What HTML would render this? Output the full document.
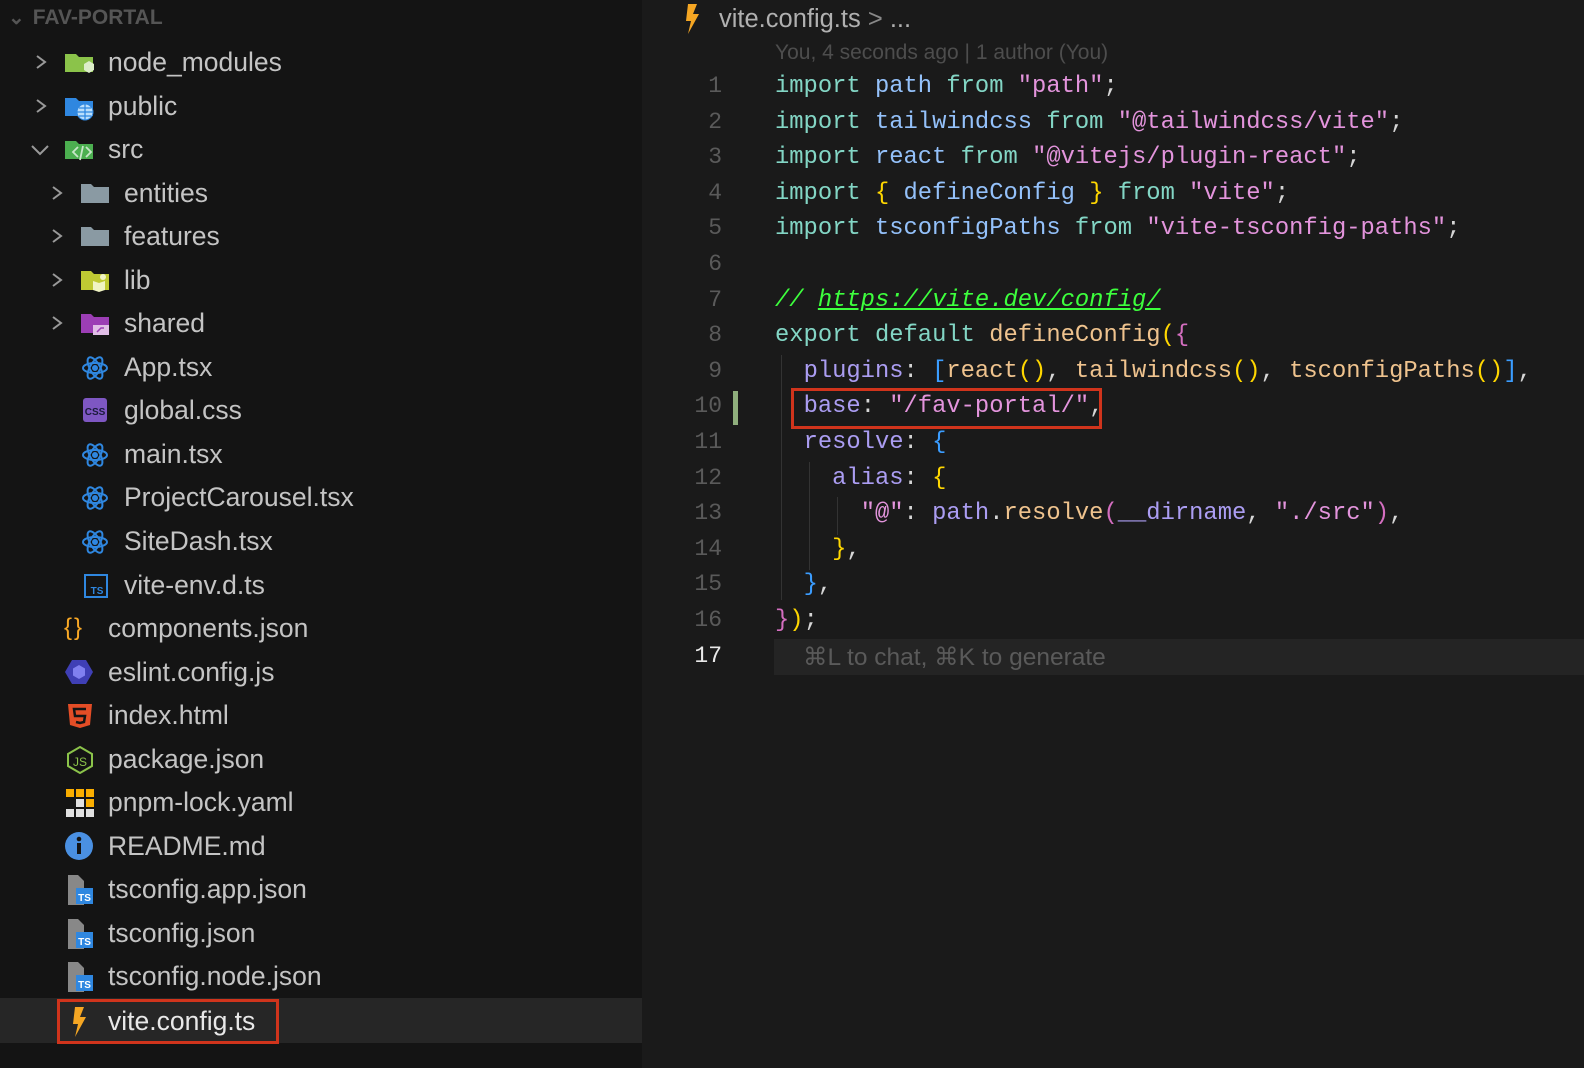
<!DOCTYPE html>
<html><head><meta charset="utf-8">
<style>
*{margin:0;padding:0;box-sizing:border-box}
body{width:1584px;height:1068px;overflow:hidden;background:#1a1a1a;font-family:"Liberation Sans",sans-serif;position:relative}
#side{position:absolute;left:0;top:0;width:642px;height:1068px;background:#141414}
.r{position:absolute;height:44px;line-height:44px;font-size:26.5px;color:#c4c4c4;white-space:nowrap}
.code{position:absolute;left:775px;font-family:"Liberation Mono",monospace;font-size:23.8px;line-height:35.6px;white-space:pre;color:#d6d6d6}
.ln{position:absolute;left:660px;width:62px;text-align:right;font-family:"Liberation Mono",monospace;font-size:23px;line-height:35.6px;color:#5a5a5a}
.k{color:#83d6c5}.v{color:#94c1fa}.s{color:#e394dc}.y{color:#ffd700}.f{color:#efc38e}.p{color:#ab9df2}.b{color:#3b9dff}.pk{color:#d46ec0}.w{color:#d6d6d6}
.g{position:absolute;width:1px;background:#333}
</style></head><body>
<div id="side">
<div class="r" style="left:8px;top:0;height:36px;line-height:36px;font-size:21px;font-weight:bold;color:#555"><span style="font-size:20px;color:#555;margin-right:8px">&#8964;</span>FAV-PORTAL</div>
<div style="position:absolute;left:0;top:998px;width:642px;height:45px;background:#262626"></div>
<div style="position:absolute;left:57px;top:999px;width:222px;height:45px;border:3px solid #d0341c"></div>

<div class="r" style="top:40px;left:0;width:640px">
 <svg style="position:absolute;left:34px;top:14px" width="14" height="16"><path d="M3 2l8 6-8 6" fill="none" stroke="#999" stroke-width="2"/></svg>
 <svg style="position:absolute;left:65px;top:11px" width="32" height="24"><path d="M0 3h11l3 3h14v15H0z" fill="#8bc34a"/><path d="M24 10l5 3v6l-5 3-5-3v-6z" fill="#dcedc8"/></svg>
 <span style="position:absolute;left:108px">node_modules</span></div>
<div class="r" style="top:84px;left:0;width:640px">
 <svg style="position:absolute;left:34px;top:14px" width="14" height="16"><path d="M3 2l8 6-8 6" fill="none" stroke="#999" stroke-width="2"/></svg>
 <svg style="position:absolute;left:65px;top:11px" width="32" height="26"><path d="M0 3h11l3 3h14v15H0z" fill="#2f87e0"/><circle cx="20" cy="17" r="8" fill="#bbdefb" stroke="#2f87e0" stroke-width="1"/><path d="M12 17h16M20 9v16M14 13h12M14 21h12" stroke="#2f87e0" stroke-width="1.3"/></svg>
 <span style="position:absolute;left:108px">public</span></div>
<div class="r" style="top:127px;left:0;width:640px">
 <svg style="position:absolute;left:30px;top:16px" width="20" height="14"><path d="M2 3l8 8 8-8" fill="none" stroke="#999" stroke-width="2"/></svg>
 <svg style="position:absolute;left:65px;top:11px" width="32" height="24"><path d="M0 3h11l3 3h14v15H0z" fill="#4caf50"/><path d="M13 9l-5 5 5 5M21 9l5 5-5 5M18 8l-3 14" fill="none" stroke="#c8e6c9" stroke-width="1.8"/></svg>
 <span style="position:absolute;left:108px">src</span></div>
<div class="r" style="top:171px;left:0"><svg style="position:absolute;left:50px;top:14px" width="14" height="16"><path d="M3 2l8 6-8 6" fill="none" stroke="#999" stroke-width="2"/></svg><svg style="position:absolute;left:81px;top:13px" width="30" height="20"><path d="M0 0h10l3 3h15v16H0z" fill="#8a9aa3"/></svg><span style="position:absolute;left:124px">entities</span></div>
<div class="r" style="top:214px;left:0"><svg style="position:absolute;left:50px;top:14px" width="14" height="16"><path d="M3 2l8 6-8 6" fill="none" stroke="#999" stroke-width="2"/></svg><svg style="position:absolute;left:81px;top:13px" width="30" height="20"><path d="M0 0h10l3 3h15v16H0z" fill="#8a9aa3"/></svg><span style="position:absolute;left:124px">features</span></div>
<div class="r" style="top:258px;left:0"><svg style="position:absolute;left:50px;top:14px" width="14" height="16"><path d="M3 2l8 6-8 6" fill="none" stroke="#999" stroke-width="2"/></svg><svg style="position:absolute;left:81px;top:11px" width="32" height="24"><path d="M0 2h10l3 3h15v16H0z" fill="#c0ca33"/><path d="M12 12l6 2 6-2v9l-6 2-6-2z" fill="#f0f4c3"/><circle cx="22" cy="8" r="3" fill="#f0f4c3"/></svg><span style="position:absolute;left:124px">lib</span></div>
<div class="r" style="top:301px;left:0"><svg style="position:absolute;left:50px;top:14px" width="14" height="16"><path d="M3 2l8 6-8 6" fill="none" stroke="#999" stroke-width="2"/></svg><svg style="position:absolute;left:81px;top:11px" width="32" height="24"><path d="M0 2h10l3 3h15v16H0z" fill="#9c3eb5"/><rect x="12" y="13" width="16" height="10" fill="#e1bee7"/><path d="M16 20l4-4h3" stroke="#9c3eb5" stroke-width="1.5" fill="none"/></svg><span style="position:absolute;left:124px">shared</span></div>
<div class="r" style="top:345px;left:0"><svg style="position:absolute;left:81px;top:9px" width="28" height="28" viewBox="0 0 28 28" fill="none" stroke="#2f87e0" stroke-width="2"><ellipse cx="14" cy="14" rx="12" ry="5"/><ellipse cx="14" cy="14" rx="12" ry="5" transform="rotate(60 14 14)"/><ellipse cx="14" cy="14" rx="12" ry="5" transform="rotate(120 14 14)"/><circle cx="14" cy="14" r="2" fill="#2f87e0"/></svg><span style="position:absolute;left:124px">App.tsx</span></div>
<div class="r" style="top:388px;left:0"><svg style="position:absolute;left:83px;top:10px" width="24" height="24"><rect width="24" height="24" rx="3" fill="#7e57c2"/><text x="12" y="17" font-size="10" font-family="Liberation Sans" font-weight="bold" text-anchor="middle" fill="#1a1a3a">CSS</text></svg><span style="position:absolute;left:124px">global.css</span></div>
<div class="r" style="top:432px;left:0"><svg style="position:absolute;left:81px;top:9px" width="28" height="28" viewBox="0 0 28 28" fill="none" stroke="#2f87e0" stroke-width="2"><ellipse cx="14" cy="14" rx="12" ry="5"/><ellipse cx="14" cy="14" rx="12" ry="5" transform="rotate(60 14 14)"/><ellipse cx="14" cy="14" rx="12" ry="5" transform="rotate(120 14 14)"/><circle cx="14" cy="14" r="2" fill="#2f87e0"/></svg><span style="position:absolute;left:124px">main.tsx</span></div>
<div class="r" style="top:475px;left:0"><svg style="position:absolute;left:81px;top:9px" width="28" height="28" viewBox="0 0 28 28" fill="none" stroke="#2f87e0" stroke-width="2"><ellipse cx="14" cy="14" rx="12" ry="5"/><ellipse cx="14" cy="14" rx="12" ry="5" transform="rotate(60 14 14)"/><ellipse cx="14" cy="14" rx="12" ry="5" transform="rotate(120 14 14)"/><circle cx="14" cy="14" r="2" fill="#2f87e0"/></svg><span style="position:absolute;left:124px">ProjectCarousel.tsx</span></div>
<div class="r" style="top:519px;left:0"><svg style="position:absolute;left:81px;top:9px" width="28" height="28" viewBox="0 0 28 28" fill="none" stroke="#2f87e0" stroke-width="2"><ellipse cx="14" cy="14" rx="12" ry="5"/><ellipse cx="14" cy="14" rx="12" ry="5" transform="rotate(60 14 14)"/><ellipse cx="14" cy="14" rx="12" ry="5" transform="rotate(120 14 14)"/><circle cx="14" cy="14" r="2" fill="#2f87e0"/></svg><span style="position:absolute;left:124px">SiteDash.tsx</span></div>
<div class="r" style="top:563px;left:0"><svg style="position:absolute;left:84px;top:11px" width="24" height="24"><rect x="1" y="1" width="22" height="22" fill="none" stroke="#2f87e0" stroke-width="2"/><text x="13" y="20" font-size="10" font-family="Liberation Sans" font-weight="bold" text-anchor="middle" fill="#2f87e0">TS</text></svg><span style="position:absolute;left:124px">vite-env.d.ts</span></div>
<div class="r" style="top:606px;left:0"><span style="position:absolute;left:64px;color:#f9a825;font-size:24px;letter-spacing:2px">{}</span><span style="position:absolute;left:108px">components.json</span></div>
<div class="r" style="top:650px;left:0"><svg style="position:absolute;left:65px;top:9px" width="28" height="26"><path d="M7 1h14l7 12-7 12H7L0 13z" fill="#3f3fb5"/><path d="M14 6l6 3.5v7L14 20l-6-3.5v-7z" fill="#8080f0"/></svg><span style="position:absolute;left:108px">eslint.config.js</span></div>
<div class="r" style="top:693px;left:0"><svg style="position:absolute;left:67px;top:10px" width="26" height="26"><path d="M1 1h24l-2 21-10 3-10-3z" fill="#e44d26"/><path d="M19 6H7l1 7h10l-1 6-4 1-4-1" fill="none" stroke="#141414" stroke-width="2.5"/></svg><span style="position:absolute;left:108px">index.html</span></div>
<div class="r" style="top:737px;left:0"><svg style="position:absolute;left:66px;top:9px" width="28" height="28"><path d="M14 1l12 7v12l-12 7-12-7V8z" fill="none" stroke="#8bc34a" stroke-width="2"/><text x="14" y="20" font-size="12" font-family="Liberation Sans" text-anchor="middle" fill="#8bc34a">JS</text></svg><span style="position:absolute;left:108px">package.json</span></div>
<div class="r" style="top:780px;left:0"><svg style="position:absolute;left:66px;top:9px" width="28" height="28"><g fill="#f9ad00"><rect x="0" y="0" width="8" height="8"/><rect x="10" y="0" width="8" height="8"/><rect x="20" y="0" width="8" height="8"/><rect x="20" y="10" width="8" height="8"/></g><g fill="#e0e0e0"><rect x="10" y="10" width="8" height="8"/><rect x="0" y="20" width="8" height="8"/><rect x="10" y="20" width="8" height="8"/><rect x="20" y="20" width="8" height="8"/></g></svg><span style="position:absolute;left:108px">pnpm-lock.yaml</span></div>
<div class="r" style="top:824px;left:0"><svg style="position:absolute;left:65px;top:8px" width="28" height="28"><circle cx="14" cy="14" r="14" fill="#4a90e2"/><rect x="12" y="11" width="4" height="11" fill="#141414"/><circle cx="14" cy="7" r="2.3" fill="#141414"/></svg><span style="position:absolute;left:108px">README.md</span></div>
<div class="r" style="top:867px;left:0"><svg style="position:absolute;left:66px;top:8px" width="28" height="30"><path d="M2 0h10l6 6v24H2z" fill="#888"/><rect x="10" y="13" width="17" height="16" fill="#2f87e0"/><text x="18.5" y="26" font-size="10" font-family="Liberation Sans" font-weight="bold" text-anchor="middle" fill="#fff">TS</text></svg><span style="position:absolute;left:108px">tsconfig.app.json</span></div>
<div class="r" style="top:911px;left:0"><svg style="position:absolute;left:66px;top:8px" width="28" height="30"><path d="M2 0h10l6 6v24H2z" fill="#888"/><rect x="10" y="13" width="17" height="16" fill="#2f87e0"/><text x="18.5" y="26" font-size="10" font-family="Liberation Sans" font-weight="bold" text-anchor="middle" fill="#fff">TS</text></svg><span style="position:absolute;left:108px">tsconfig.json</span></div>
<div class="r" style="top:954px;left:0"><svg style="position:absolute;left:66px;top:8px" width="28" height="30"><path d="M2 0h10l6 6v24H2z" fill="#888"/><rect x="10" y="13" width="17" height="16" fill="#2f87e0"/><text x="18.5" y="26" font-size="10" font-family="Liberation Sans" font-weight="bold" text-anchor="middle" fill="#fff">TS</text></svg><span style="position:absolute;left:108px">tsconfig.node.json</span></div>
<div class="r" style="top:999px;left:0;color:#e8e8e8"><svg style="position:absolute;left:70px;top:8px" width="18" height="30"><path d="M5 0h9l-4 10h6L5 30l3-13H3z" fill="#f5a623"/></svg><span style="position:absolute;left:108px">vite.config.ts</span></div>
</div>

<svg style="position:absolute;left:683px;top:4px" width="18" height="30"><path d="M5 0h9l-4 10h6L5 30l3-13H3z" fill="#f5a623"/></svg>
<div style="position:absolute;left:719px;top:2px;font-size:25.5px;line-height:34px;color:#b0b0b0">vite.config.ts <span style="color:#888">&gt;</span> ...</div>
<div style="position:absolute;left:775px;top:39px;font-size:21px;line-height:28px;color:#4d4d4d">You, 4 seconds ago | 1 author (You)</div>

<div style="position:absolute;left:774px;top:639px;width:810px;height:36px;background:#242424"></div>
<div style="position:absolute;left:733px;top:391px;width:5px;height:34px;background:#8fae7c"></div>
<div class="g" style="left:781px;top:355px;height:245px"></div>
<div class="g" style="left:809px;top:462px;height:108px"></div>
<div class="g" style="left:837px;top:497px;height:38px"></div>
<div style="position:absolute;left:791px;top:388px;width:311px;height:41px;border:3px solid #d0341c"></div>

<div class="ln" style="top:69px">1</div>
<div class="ln" style="top:104.6px">2</div>
<div class="ln" style="top:140.2px">3</div>
<div class="ln" style="top:175.8px">4</div>
<div class="ln" style="top:211.4px">5</div>
<div class="ln" style="top:247px">6</div>
<div class="ln" style="top:282.6px">7</div>
<div class="ln" style="top:318.2px">8</div>
<div class="ln" style="top:353.8px">9</div>
<div class="ln" style="top:389.4px">10</div>
<div class="ln" style="top:425px">11</div>
<div class="ln" style="top:460.6px">12</div>
<div class="ln" style="top:496.2px">13</div>
<div class="ln" style="top:531.8px">14</div>
<div class="ln" style="top:567.4px">15</div>
<div class="ln" style="top:603px">16</div>
<div class="ln" style="top:638.6px;color:#e8e8e8">17</div>

<div class="code" style="top:69px"><span class="k">import</span> <span class="v">path</span> <span class="k">from</span> <span class="s">"path"</span>;</div>
<div class="code" style="top:104.6px"><span class="k">import</span> <span class="v">tailwindcss</span> <span class="k">from</span> <span class="s">"@tailwindcss/vite"</span>;</div>
<div class="code" style="top:140.2px"><span class="k">import</span> <span class="v">react</span> <span class="k">from</span> <span class="s">"@vitejs/plugin-react"</span>;</div>
<div class="code" style="top:175.8px"><span class="k">import</span> <span class="y">{</span> <span class="v">defineConfig</span> <span class="y">}</span> <span class="k">from</span> <span class="s">"vite"</span>;</div>
<div class="code" style="top:211.4px"><span class="k">import</span> <span class="v">tsconfigPaths</span> <span class="k">from</span> <span class="s">"vite-tsconfig-paths"</span>;</div>
<div class="code" style="top:282.6px;color:#3dff3d;font-style:italic">// <span style="text-decoration:underline">https://vite.dev/config/</span></div>
<div class="code" style="top:318.2px"><span class="k">export</span> <span class="k">default</span> <span class="f">defineConfig</span><span class="y">(</span><span class="pk">{</span></div>
<div class="code" style="top:353.8px">  <span class="p">plugins</span>: <span class="b">[</span><span class="f">react</span><span class="y">()</span>, <span class="f">tailwindcss</span><span class="y">()</span>, <span class="f">tsconfigPaths</span><span class="y">()</span><span class="b">]</span>,</div>
<div class="code" style="top:389.4px">  <span class="p">base</span>: <span class="s">"/fav-portal/"</span>,</div>
<div class="code" style="top:425px">  <span class="p">resolve</span>: <span class="b">{</span></div>
<div class="code" style="top:460.6px">    <span class="p">alias</span>: <span class="y">{</span></div>
<div class="code" style="top:496.2px">      <span class="s">"@"</span>: <span class="p">path</span>.<span class="f">resolve</span><span class="pk">(</span><span class="p">__dirname</span>, <span class="s">"./src"</span><span class="pk">)</span>,</div>
<div class="code" style="top:531.8px">    <span class="y">}</span>,</div>
<div class="code" style="top:567.4px">  <span class="b">}</span>,</div>
<div class="code" style="top:603px"><span class="pk">}</span><span class="y">)</span>;</div>
<div style="position:absolute;left:803px;top:641px;font-size:24.5px;line-height:34px;color:#5a5a5a">⌘L to chat, ⌘K to generate</div>
</body></html>
